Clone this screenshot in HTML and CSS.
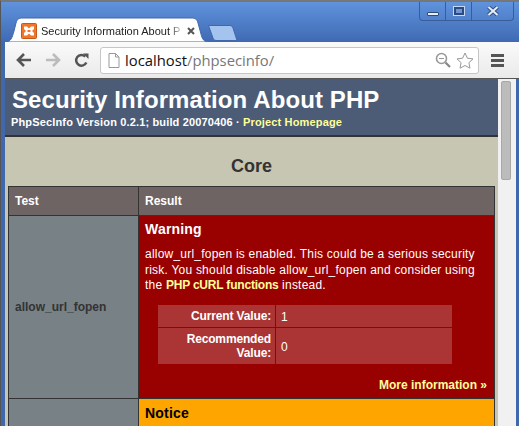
FILE: index.html
```html
<!DOCTYPE html>
<html>
  <head>
    <title>Security Information About PHP</title>
    <meta charset="utf-8" />
    <link rel="stylesheet" href="styles.css">
  </head>
  <body>
    <div class="window">
      <div class="titlebar">
        <div class="tab">
          <svg class="tabShape" width="204" height="25" viewBox="0 0 204 25">
            <path d="M0 25 C6 25 7 21 9 14 L11 6 C12 2 14 1 18 1 L186 1 C190 1 192 2 193 6 L196 17 C197 22 199 25 204 25 Z" fill="#fff" stroke="#3f68ad" />
          </svg>
          <svg class="favicon" width="16" height="16" viewBox="0 0 16 16">
            <rect x="0.5" y="0.5" width="15" height="15" rx="1" fill="#f0762a" stroke="#c9571a" />
            <path d="M3 3.5 H6 L8 5.5 L10 3.5 H13 V6 L11 8 L13 10 V12.5 H10 L8 10.5 L6 12.5 H3 V10 L5 8 L3 6 Z M6.5 7 V9 H9.5 V7 Z" fill="#fff" fill-rule="evenodd" />
          </svg>
          <span class="tabTitle">Security Information About P</span>
          <svg class="tabClose" width="8" height="8" viewBox="0 0 8 8">
            <path d="M1 1 L7 7 M7 1 L1 7" stroke="#555" stroke-width="2" />
          </svg>
        </div>
        <svg class="newTab" width="30" height="16" viewBox="0 0 30 16">
          <path d="M0.5 0.5 H22 C24 0.5 24.5 2 25 3 L29 15.5 H8 C6 15.5 5.5 14 5 13 Z" fill="#a4c4ef" stroke="#3f68ad" />
        </svg>
        <div class="winBtns">
          <div class="winBtn minBtn"><span class="minIcon"></span></div>
          <div class="winBtn maxBtn"><span class="maxIcon"></span></div>
          <div class="winBtn closeBtn">
            <svg width="12" height="10" viewBox="0 0 12 10">
              <path d="M1.5 1 L10.5 9 M10.5 1 L1.5 9" stroke="#2f4f88" stroke-width="4" />
              <path d="M1.5 1 L10.5 9 M10.5 1 L1.5 9" stroke="#e8eef8" stroke-width="2" />
            </svg>
          </div>
        </div>
      </div>
      <div class="toolbar">
        <svg class="navIcon" width="16" height="14" viewBox="0 0 16 14">
          <path d="M8 1 L2 7 L8 13 M2 7 H15" fill="none" stroke="#555" stroke-width="2.6" />
        </svg>
        <svg class="navIcon" width="16" height="14" viewBox="0 0 16 14">
          <path d="M8 1 L14 7 L8 13 M14 7 H1" fill="none" stroke="#bbb" stroke-width="2.6" />
        </svg>
        <svg class="navIcon" width="15" height="15" viewBox="0 0 15 15">
          <path d="M12.3 9.5 A5.3 5.3 0 1 1 11.2 3.6" fill="none" stroke="#555" stroke-width="2.5" />
          <path d="M9 0.5 H14.5 V6 Z" fill="#555" />
        </svg>
        <div class="omnibox">
          <svg class="pageIcon" width="12" height="15" viewBox="0 0 12 15">
            <path d="M1 .5 H7.5 L11 4 V14.5 H1 Z M7.5 .5 V4 H11" fill="#fff" stroke="#999" />
          </svg>
          <span class="url">localhost<span class="urlPath">/phpsecinfo/</span></span>
          <svg class="zoomIcon" width="16" height="16" viewBox="0 0 16 16">
            <circle cx="6.5" cy="6.5" r="5" fill="none" stroke="#999" stroke-width="1.6" />
            <path d="M4 6.5 H9" stroke="#999" />
            <path d="M10.5 10.5 L15 15" stroke="#888" stroke-width="2.2" />
          </svg>
          <svg class="starIcon" width="18" height="17" viewBox="0 0 18 17">
            <path d="M9 1 L11.4 6.2 L17 6.9 L12.9 10.7 L14 16.2 L9 13.5 L4 16.2 L5.1 10.7 L1 6.9 L6.6 6.2 Z" fill="#fff" stroke="#999" />
          </svg>
        </div>
        <div class="menuIcon"><span></span><span></span><span></span></div>
      </div>
      <div class="viewport">
        <div class="page">
          <div class="pageHeader">
            <h1>Security Information About PHP</h1>
            <div class="version">PhpSecInfo Version 0.2.1; build 20070406 · <a class="homeLink">Project Homepage</a></div>
          </div>
          <h2>Core</h2>
          <table class="results">
            <tr>
              <th class="colTest">Test</th>
              <th>Result</th>
            </tr>
            <tr>
              <td class="testName">allow_url_fopen</td>
              <td class="warning">
                <h3>Warning</h3>
                <p>allow_url_fopen is enabled. This could be a serious security risk. You should disable allow_url_fopen and consider using the <b class="phpLink">PHP cURL functions</b> instead.</p>
                <table class="values">
                  <tr>
                    <th>Current Value:</th>
                    <td>1</td>
                  </tr>
                  <tr>
                    <th>Recommended Value:</th>
                    <td>0</td>
                  </tr>
                </table>
                <div class="moreInfo">More information »</div>
              </td>
            </tr>
            <tr>
              <td class="testName"></td>
              <td class="notice"><h3>Notice</h3></td>
            </tr>
          </table>
        </div>
        <div class="scrollbar"><div class="thumb"></div></div>
      </div>
    </div>
  </body>
</html>
```

FILE: styles.css
```css
html,
body {
  margin: 0;
  height: 426px;
  overflow: hidden;
}
body {
  background: #fff;
  font-family: "Liberation Sans", Arial, sans-serif;
}
.window {
  width: 519px;
  height: 426px;
  box-sizing: border-box;
  display: flex;
  flex-direction: column;
  background: #3f68ad;
  border-top: 2px solid #777;
  border-left: 1px solid #555;
  overflow: hidden;
}
.titlebar {
  height: 40px;
  flex: none;
  display: flex;
  align-items: flex-end;
  background: linear-gradient(#5f93dc, #3f6ab3);
}
.tab {
  position: relative;
  width: 204px;
  height: 25px;
  box-sizing: border-box;
  padding-top: 2px;
  margin-left: 4px;
  display: flex;
  align-items: center;
  flex: none;
}
.tabShape {
  position: absolute;
  left: 0;
  top: 0;
}
.favicon {
  position: relative;
  margin-left: 16px;
}
.tabTitle {
  position: relative;
  margin-left: 4px;
  width: 143px;
  white-space: nowrap;
  font-size: 11px;
  color: #222;
  -webkit-mask-image: linear-gradient(to right, #000 128px, transparent 143px);
  mask-image: linear-gradient(to right, #000 128px, transparent 143px);
}
.tabClose {
  position: relative;
  margin-left: 3px;
}
.newTab {
  margin: 0 0 1px -1px;
}
.winBtns {
  margin-left: auto;
  margin-right: 5px;
  align-self: flex-start;
  height: 18px;
  display: flex;
  border: 1px solid #3a5d9a;
  border-top: none;
  border-radius: 0 0 4px 4px;
}
.winBtn {
  height: 18px;
  display: flex;
  align-items: center;
  justify-content: center;
  border-left: 1px solid #3a5d9a;
}
.minBtn {
  width: 25px;
  border-left: none;
}
.maxBtn {
  width: 25px;
}
.closeBtn {
  width: 41px;
}
.minIcon {
  width: 10px;
  height: 2px;
  margin-top: 5px;
  background: #e8eef8;
  border: 1px solid #2c4a80;
  border-radius: 1px;
}
.maxIcon {
  width: 6px;
  height: 4px;
  border: 2px solid #2c4a80;
  background: #6f97d6;
  outline: 1px solid #c5d8f3;
}
.toolbar {
  height: 37px;
  flex: none;
  display: flex;
  align-items: center;
  margin-left: 4px;
  padding-left: 11px;
  background: linear-gradient(#fafafa, #eaeaea);
  border-bottom: 1px solid #555;
  box-sizing: border-box;
}
.navIcon {
  margin-right: 13px;
}
.omnibox {
  width: 379px;
  height: 27px;
  box-sizing: border-box;
  flex: none;
  display: flex;
  align-items: center;
  margin-left: -2px;
  padding: 0 4px 0 7px;
  background: #fff;
  border: 1px solid #c6c6c6;
  border-radius: 3px;
}
.url {
  margin-left: 5px;
  font-family: "Open Sans", sans-serif;
  font-size: 14.8px;
  color: #111;
}
.urlPath {
  color: #777;
}
.zoomIcon {
  margin-left: auto;
}
.starIcon {
  margin-left: 5px;
}
.menuIcon {
  margin-left: 12px;
  width: 13px;
  display: flex;
  flex-direction: column;
  gap: 2px;
}
.menuIcon span {
  height: 3px;
  background: #555;
}
.viewport {
  flex: 1;
  min-height: 0;
  display: flex;
  margin-left: 4px;
}
.page {
  width: 493px;
  flex: none;
  background: #c6c6b2;
  overflow: hidden;
}
.pageHeader {
  height: 58px;
  box-sizing: border-box;
  padding: 7px 7px 0;
  background: #4c5c76;
  border-bottom: 2px solid #333;
  color: #fff;
}
h1 {
  margin: 0;
  font-size: 24px;
  line-height: 28px;
  letter-spacing: 0.1px;
}
.version {
  margin: 1px 0 0 -1px;
  font-size: 11px;
  line-height: 14px;
  font-weight: bold;
  letter-spacing: 0.15px;
}
.homeLink {
  color: #ffff99;
}
h2 {
  margin: 0;
  height: 49px;
  line-height: 58px;
  text-align: center;
  font-size: 18px;
  color: #333;
}
.results {
  width: 487px;
  margin: 0 3px;
  border-collapse: collapse;
  table-layout: fixed;
  font-size: 12px;
}
.results > tbody > tr > th,
.results > tbody > tr > td {
  border: 1px solid #333;
}
.results > tbody > tr > th {
  height: 28px;
  padding: 0 6px;
  text-align: left;
  background: #6f6464;
  color: #fff;
}
.colTest {
  width: 117px;
}
.testName {
  padding: 0 6px;
  background: #778186;
  color: #333;
  font-weight: bold;
}
.warning {
  padding: 4px 7px 6px 6px;
  background: #990000;
  color: #fff;
}
h3 {
  margin: 0;
  font-size: 14px;
  line-height: 18px;
  letter-spacing: 0.2px;
}
.warning p {
  margin: 9px 0 0;
  line-height: 15.5px;
  letter-spacing: 0.22px;
}
.phpLink {
  color: #ffff99;
  letter-spacing: -0.2px;
}
.values {
  width: 296px;
  margin: 10px 0 0 12px;
  border-collapse: collapse;
  table-layout: fixed;
  font-size: 12px;
}
.values th,
.values td {
  background: #ab3535;
  border: 1px solid #990000;
}
.values th {
  width: 109px;
  padding: 4px;
  text-align: right;
  line-height: 14px;
  letter-spacing: -0.15px;
}
.values td {
  padding: 5px 5px 3px;
}
.moreInfo {
  margin-top: 13px;
  text-align: right;
  font-weight: bold;
  color: #ffff99;
}
.notice {
  height: 40px;
  padding: 5px 7px 6px 6px;
  vertical-align: top;
  background: #ffa500;
  color: #000;
}
.scrollbar {
  width: 18px;
  padding: 2px 5px 0 3px;
  box-sizing: border-box;
  background: #f1f1f1;
  flex: none;
}
.thumb {
  height: 97px;
  background: #bcbcbc;
  border: 1px solid #a8a8a8;
  border-radius: 2px;
}
```
